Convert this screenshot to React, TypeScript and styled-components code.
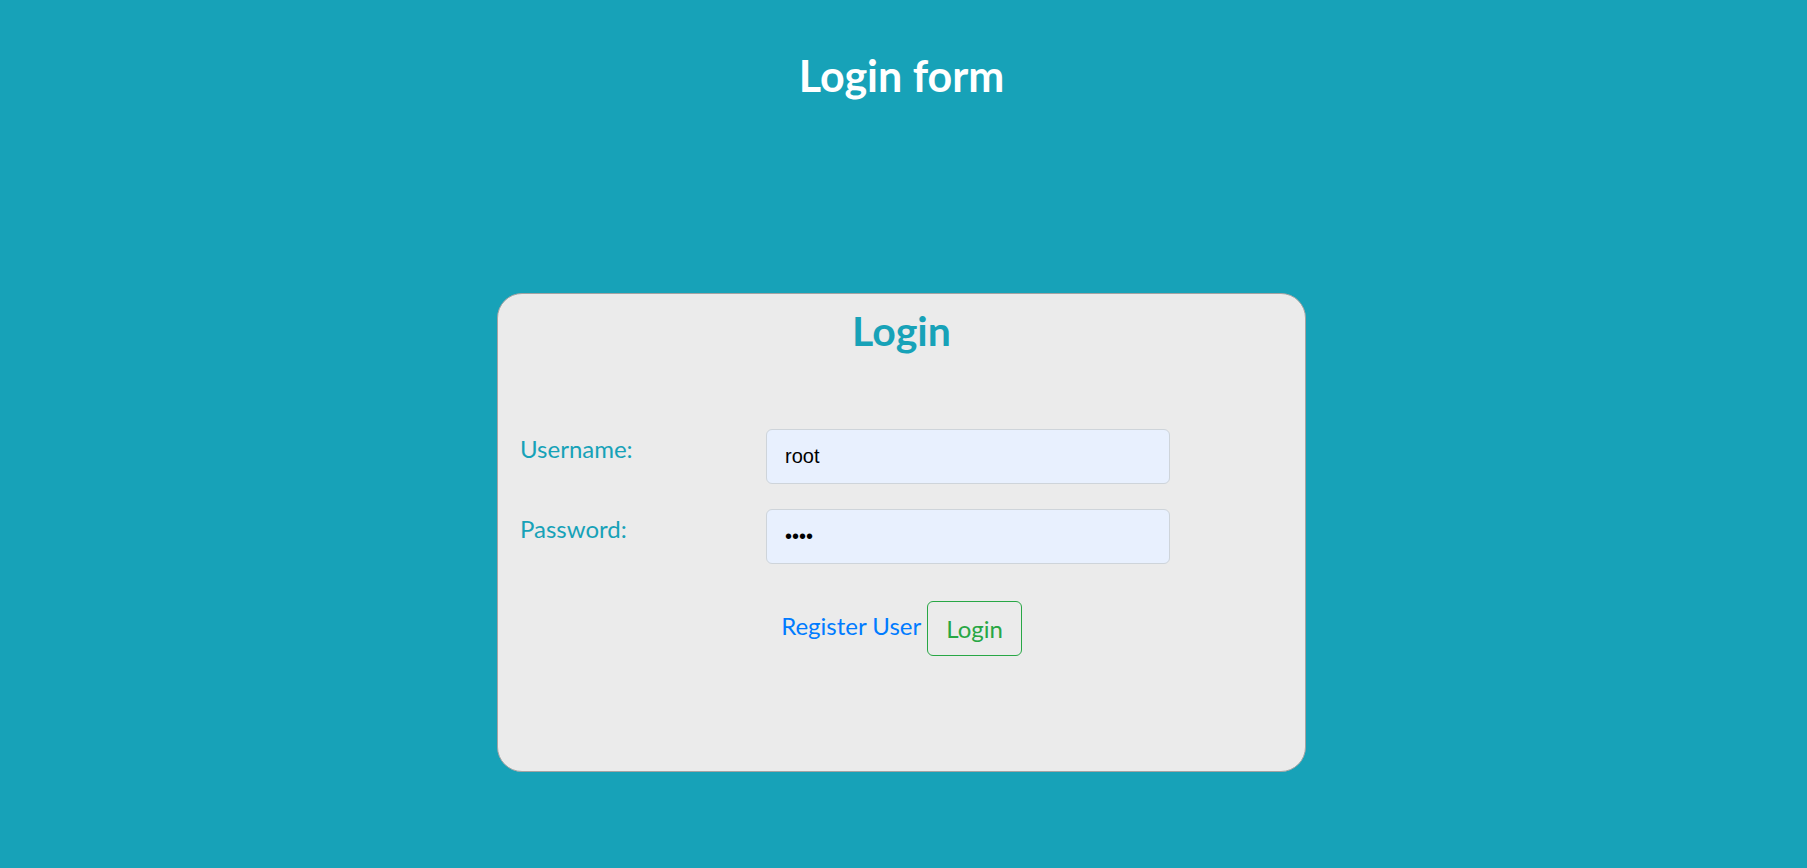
import React from "react";
import styled, { createGlobalStyle } from "styled-components";

const GlobalStyle = createGlobalStyle`
  html, body { margin: 0; padding: 0; }
  body {
    background: #17a2b8;
    font-family: Lato, "Open Sans", sans-serif;
    min-height: 868px;
  }
  * { box-sizing: border-box; }
`;

const Page = styled.div`
  display: flex;
  flex-direction: column;
  align-items: center;
  padding-top: 51px;
  padding-right: 4px;
`;

const PageTitle = styled.h1`
  margin: 0;
  font-size: 43px;
  line-height: 50px;
  font-weight: 700;
  color: #ffffff;
  text-align: center;
`;

const Card = styled.form`
  margin-top: 192px;
  width: 809px;
  height: 479px;
  background: #ebebeb;
  border: 1px solid #a3a3a3;
  border-radius: 25px;
  padding: 13px 22px 0 22px;
  display: flex;
  flex-direction: column;
`;

const CardTitle = styled.h2`
  margin: 0;
  font-size: 41px;
  line-height: 48px;
  font-weight: 700;
  color: #17a2b8;
  text-align: center;
`;

const Fields = styled.div`
  margin-top: 74px;
  display: flex;
  flex-direction: column;
  gap: 25px;
`;

const Row = styled.div`
  display: grid;
  grid-template-columns: 246px 404px;
  align-items: start;
`;

const Label = styled.label`
  padding-top: 2px;
  font-size: 24px;
  line-height: 36px;
  color: #17a2b8;
`;

const Input = styled.input`
  width: 404px;
  height: 55px;
  padding: 0 18px;
  border: 1px solid #ced4da;
  border-radius: 6px;
  background: #e8f0fe;
  font-family: "Liberation Sans", Arial, sans-serif;
  font-size: 20px;
  color: #000;
  outline: none;
`;

const Actions = styled.div`
  margin-top: 37px;
  display: flex;
  justify-content: center;
  align-items: flex-start;
  gap: 6px;
`;

const RegisterLink = styled.a`
  margin-top: 7px;
  font-size: 24px;
  line-height: 36px;
  color: #007bff;
  text-decoration: none;
  cursor: pointer;
`;

const LoginButton = styled.button`
  height: 55px;
  padding: 0 18px;
  border: 1px solid #28a745;
  border-radius: 6px;
  background: transparent;
  color: #28a745;
  font-family: Lato, "Open Sans", sans-serif;
  font-size: 24px;
  line-height: 36px;
  cursor: pointer;
`;

export default function App() {
  return (
    <>
      <GlobalStyle />
      <Page>
        <PageTitle>Login form</PageTitle>
        <Card onSubmit={(e) => e.preventDefault()}>
          <CardTitle>Login</CardTitle>
          <Fields>
            <Row>
              <Label htmlFor="username">Username:</Label>
              <Input id="username" type="text" defaultValue="root" />
            </Row>
            <Row>
              <Label htmlFor="password">Password:</Label>
              <Input id="password" type="password" defaultValue="root" />
            </Row>
          </Fields>
          <Actions>
            <RegisterLink>Register User</RegisterLink>
            <LoginButton type="submit">Login</LoginButton>
          </Actions>
        </Card>
      </Page>
    </>
  );
}
